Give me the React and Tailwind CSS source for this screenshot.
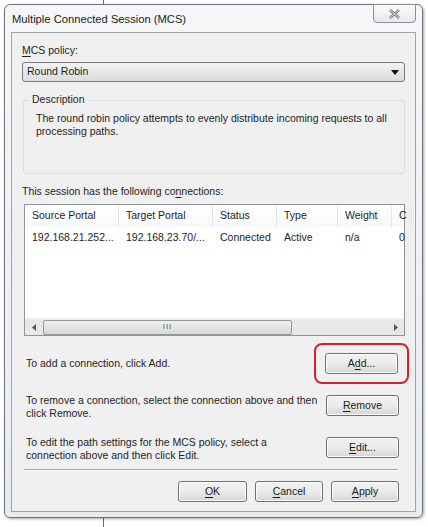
import React from 'react';

const font = { fontFamily: '"Liberation Sans", Arial, sans-serif' };

function Btn({ children, className = '' }) {
  return (
    <button
      className={`h-[21px] shrink-0 rounded-[3px] border border-[#707070] bg-gradient-to-b from-[#f2f2f2] via-[#ebebeb] to-[#d6d6d6] text-[10.5px] text-[#1a1a1a] leading-none shadow-[inset_0_0_0_1px_#fcfcfc] ${className}`}
    >
      {children}
    </button>
  );
}

const columns = [
  { label: 'Source Portal', w: 'w-[94px]' },
  { label: 'Target Portal', w: 'w-[94px]' },
  { label: 'Status', w: 'w-[64px]' },
  { label: 'Type', w: 'w-[61px]' },
  { label: 'Weight', w: 'w-[54px]' },
  { label: 'C', w: 'w-[20px]' },
];

const row = ['192.168.21.252...', '192.168.23.70/...', 'Connected', 'Active', 'n/a', '0'];

export default function App() {
  return (
    <div className="relative w-[428px] h-[527px] bg-white overflow-hidden" style={font}>
      {/* stray line behind the window */}
      <div className="absolute left-[103px] top-0 w-px h-[527px] bg-[#6b6b6b]" />

      <div className="relative ml-[4px] mt-[4px] w-[419px] h-[514px] rounded-[6px] border border-[#6f747a] bg-gradient-to-b from-[#f4f6f8] to-[#e9ecef] shadow-[1px_1px_3px_rgba(0,0,0,0.35)] flex flex-col">
        {/* title bar */}
        <div className="h-[27px] shrink-0 flex items-center pl-[7px] pt-[2px] text-[11.2px] text-[#1b1b1b]">
          Multiple Connected Session (MCS)
        </div>
        <div className="absolute right-[6px] -top-px w-[43px] h-[19px] rounded-b-[4px] border border-[#8b9097] bg-gradient-to-b from-[#fbfbfb] to-[#e6e8ea] flex items-center justify-center">
          <svg width="11" height="10" viewBox="0 0 11 10">
            <path d="M1 1 L10 9 M10 1 L1 9" stroke="#6d7177" strokeWidth="2.4" fill="none" />
            <path d="M1 1 L10 9 M10 1 L1 9" stroke="#f4f4f4" strokeWidth="0.9" fill="none" />
          </svg>
        </div>

        {/* client area */}
        <div className="mx-[6px] mb-[5px] flex-1 border border-[#9ea3a8] bg-[#f0f0f0] pl-[10px] pr-[10px] pt-[9px] text-[10.5px] text-[#1e1e1e]">
          <div className="h-[16px] leading-[16px]">
            <span className="underline underline-offset-2">M</span>CS policy:
          </div>
          <div className="mt-[4px] h-[20px] rounded-[3px] border border-[#7a7a7a] bg-gradient-to-b from-[#f3f3f3] to-[#dcdcdc] flex items-center justify-between pl-[4px] pr-[5px]">
            <span>Round Robin</span>
            <svg width="8" height="5" viewBox="0 0 8 5">
              <path d="M0 0 H8 L4 5 Z" fill="#111" />
            </svg>
          </div>

          {/* description groupbox */}
          <div className="relative mt-[18px] ml-px h-[74px] rounded-[3px] border border-[#d5dfe5] pl-[12px] pr-[12px] pt-[11px] leading-[13px]">
            <span className="absolute left-[6px] -top-[8px] bg-[#f0f0f0] px-[2px]">Description</span>
            The round robin policy attempts to evenly distribute incoming requests to all processing paths.
          </div>

          <div className="mt-[9px] h-[16px] leading-[16px]">
            This session has the following co<span className="underline underline-offset-2">n</span>nections:
          </div>

          {/* list view */}
          <div className="mt-[5px] ml-[2px] h-[132px] border border-[#8f9499] bg-white flex flex-col">
            <div className="h-[22px] flex bg-gradient-to-b from-white to-[#f7f8f9]">
              {columns.map((c, i) => (
                <div
                  key={i}
                  className={`${c.w} shrink-0 pl-[7px] flex items-center border-r border-[#e3e5e8] overflow-hidden whitespace-nowrap`}
                >
                  {c.label}
                </div>
              ))}
            </div>
            <div className="h-[21px] flex items-center">
              {row.map((v, i) => (
                <div key={i} className={`${columns[i].w} shrink-0 pl-[7px] overflow-hidden whitespace-nowrap`}>
                  {v}
                </div>
              ))}
            </div>
            <div className="flex-1" />
            <div className="h-[17px] flex items-center bg-[#e8e8e8] border-t border-[#f0f0f0]">
              <div className="w-[18px] flex justify-center">
                <svg width="4" height="7" viewBox="0 0 4 7">
                  <path d="M4 0 V7 L0 3.5 Z" fill="#555" />
                </svg>
              </div>
              <div className="w-[249px] h-[15px] rounded-[2px] border border-[#989898] bg-gradient-to-b from-[#f0f0f0] to-[#d9d9d9] flex items-center justify-center text-[8px] text-[#555] tracking-[1px]">
                III
              </div>
              <div className="flex-1" />
              <div className="w-[17px] flex justify-center">
                <svg width="4" height="7" viewBox="0 0 4 7">
                  <path d="M0 0 V7 L4 3.5 Z" fill="#555" />
                </svg>
              </div>
            </div>
          </div>

          {/* actions */}
          <div className="mt-[17px] ml-[4px] flex items-center justify-between pr-[5px]">
            <span>To add a connection, click Add.</span>
            <div className="rounded-[8px] border-2 border-[#d8202a] px-[9px] py-[8px] -my-[10px] -mr-[9px]">
              <Btn className="w-[73px] h-[20px]">
                A<span className="underline underline-offset-2">d</span>d...
              </Btn>
            </div>
          </div>

          <div className="mt-[21px] ml-[4px] h-[26px] flex items-start justify-between pr-[6px]">
            <span className="w-[292px] leading-[13px] -mt-[1px]">
              To remove a connection, select the connection above and then click Remove.
            </span>
            <Btn className="w-[73px] h-[20px]">
              <span className="underline underline-offset-2">R</span>emove
            </Btn>
          </div>

          <div className="mt-[16px] ml-[4px] h-[26px] flex items-start justify-between pr-[6px]">
            <span className="w-[270px] leading-[13px] -mt-[1px]">
              To edit the path settings for the MCS policy, select a connection above and then click Edit.
            </span>
            <Btn className="w-[73px] h-[20px]">
              <span className="underline underline-offset-2">E</span>dit...
            </Btn>
          </div>

          <div className="mt-[6px] ml-[2px] mr-[7px] h-[2px] border-t border-[#a0a0a0] border-b border-b-white" />

          <div className="mt-[10px] flex justify-end gap-[8px] pr-[6px]">
            <Btn className="w-[69px] h-[20px]">
              <span className="underline underline-offset-2">O</span>K
            </Btn>
            <Btn className="w-[68px] h-[20px]">
              <span className="underline underline-offset-2">C</span>ancel
            </Btn>
            <Btn className="w-[68px] h-[20px]">
              <span className="underline underline-offset-2">A</span>pply
            </Btn>
          </div>
        </div>
      </div>
    </div>
  );
}
